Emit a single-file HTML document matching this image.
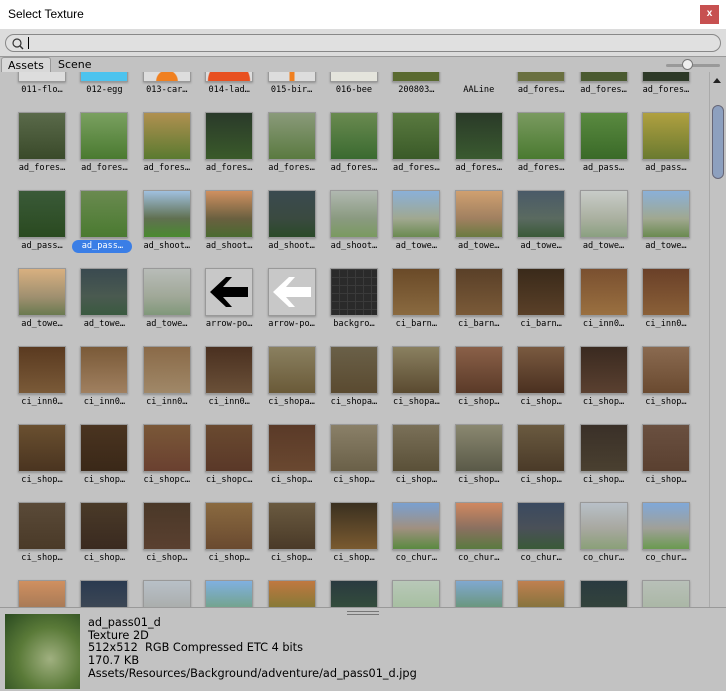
<!DOCTYPE html>
<html><head><meta charset="utf-8"><style>
*{box-sizing:border-box;margin:0;padding:0}
body{width:726px;height:691px;overflow:hidden;background:#c2c2c2;font-family:"DejaVu Sans","Liberation Sans",sans-serif;position:relative}
.title{position:absolute;left:0;top:0;width:726px;height:29px;background:#fff;font-size:12px;padding:7px 0 0 8px;color:#000;font-family:"Liberation Sans",sans-serif}
.close{position:absolute;right:7px;top:5px;width:19px;height:19px;background:#c75050;color:#fff;font-size:10px;text-align:center;line-height:18px;font-weight:bold}
.sbar{position:absolute;left:0;top:29px;width:726px;height:27px;background:#dcdcdc}
.search{position:absolute;left:5px;top:5px;width:716px;height:18px;border:1px solid #888;border-radius:9px;background:#e0e0e0}
.tabs{position:absolute;left:0;top:56px;width:726px;height:16px;background:#c2c2c2;border-top:1px solid #999}
.tab{position:absolute;top:0;height:16px;font-size:11px;padding:1px 6px;color:#000}
.grid{position:absolute;left:0;top:72px;width:708px;height:535px;overflow:hidden;background:#c2c2c2}
.in{position:absolute;left:11px;top:-38px;display:grid;grid-template-columns:repeat(11,62.4px);grid-auto-rows:78px}
.c{position:relative}
.t{position:absolute;left:7px;top:0;width:48px;height:48px;border:1px solid #999;box-shadow:0 1px 2px rgba(0,0,0,.25)}
.l{position:absolute;left:0;top:50px;width:62px;text-align:center;font-family:"DejaVu Sans Mono",monospace;font-size:8.6px;color:#000;line-height:13px}
.sel{background:#3a7ee6;color:#fff;border-radius:7px;left:-1px;width:60px}
.scroll{position:absolute;left:709px;top:72px;width:16px;height:535px;background:#c2c2c2;border-left:1px solid #aaa}
.pane{position:absolute;left:0;top:607px;width:726px;height:84px;background:#c2c2c2;border-top:1px solid #999}
.info{position:absolute;left:88px;top:9px;font-size:11.3px;line-height:12.7px;color:#000}
</style></head><body>
<div class="title">Select Texture<div class="close">x</div></div>
<div class="sbar"><div class="search"><svg width="14" height="14" style="position:absolute;left:5px;top:2px"><circle cx="6" cy="6" r="4" fill="none" stroke="#333" stroke-width="1.2"/><line x1="9" y1="9" x2="12" y2="12" stroke="#333" stroke-width="1.4"/></svg><div style="position:absolute;left:22px;top:2px;width:1px;height:12px;background:#000"></div></div></div>
<div class="tabs"><div class="tab" style="left:1px;background:#d8d8d8;border:1px solid #999;border-bottom:none;border-radius:3px 3px 0 0">Assets</div><div class="tab" style="left:52px">Scene</div>
<div style="position:absolute;left:666px;top:7px;width:54px;height:3px;background:#999;border-radius:2px"></div><div style="position:absolute;left:682px;top:2px;width:11px;height:11px;border-radius:6px;background:#eee;border:1px solid #777"></div></div>
<div class="grid"><div class="in">
<div class="c"><div class="t" style="background:linear-gradient(#ddd 70%,#ddd);"></div><div class="l">011-flo…</div></div>
<div class="c"><div class="t" style="background:linear-gradient(#ddd 80%,#4cc3ee 80%)"></div><div class="l">012-egg</div></div>
<div class="c"><div class="t" style="background:radial-gradient(circle at 50% 100%,#f08020 20%,#ddd 22%)"></div><div class="l">013-car…</div></div>
<div class="c"><div class="t" style="background:radial-gradient(circle at 50% 100%,#e85020 40%,#ddd 42%)"></div><div class="l">014-lad…</div></div>
<div class="c"><div class="t" style="background:linear-gradient(90deg,#ddd 45%,#f08020 45%,#f08020 55%,#ddd 55%)"></div><div class="l">015-bir…</div></div>
<div class="c"><div class="t" style="background:#e4e4dc"></div><div class="l">016-bee</div></div>
<div class="c"><div class="t" style="background:#5a6a30"></div><div class="l">200803…</div></div>
<div class="c"><div class="t" style="background:#c2c2c2;border:none;box-shadow:none"></div><div class="l">AALine</div></div>
<div class="c"><div class="t" style="background:#6a7040"></div><div class="l">ad_fores…</div></div>
<div class="c"><div class="t" style="background:#4a5a30"></div><div class="l">ad_fores…</div></div>
<div class="c"><div class="t" style="background:#2e3a28"></div><div class="l">ad_fores…</div></div>

<div class="c"><div class="t" style="background:linear-gradient(#5a6a4a,#3a4a2a)"></div><div class="l">ad_fores…</div></div>
<div class="c"><div class="t" style="background:linear-gradient(#7aa060,#4a7a30)"></div><div class="l">ad_fores…</div></div>
<div class="c"><div class="t" style="background:linear-gradient(#b09050,#5a7a30)"></div><div class="l">ad_fores…</div></div>
<div class="c"><div class="t" style="background:linear-gradient(#2a3a2a,#3a5a2a)"></div><div class="l">ad_fores…</div></div>
<div class="c"><div class="t" style="background:linear-gradient(#8a9a7a,#5a7a40)"></div><div class="l">ad_fores…</div></div>
<div class="c"><div class="t" style="background:linear-gradient(#6a8a50,#3a6a30)"></div><div class="l">ad_fores…</div></div>
<div class="c"><div class="t" style="background:linear-gradient(#5a7a40,#3a5a28)"></div><div class="l">ad_fores…</div></div>
<div class="c"><div class="t" style="background:linear-gradient(#2a3a28,#3a5a30)"></div><div class="l">ad_fores…</div></div>
<div class="c"><div class="t" style="background:linear-gradient(#7a9a60,#4a7a30)"></div><div class="l">ad_fores…</div></div>
<div class="c"><div class="t" style="background:linear-gradient(#5a8a40,#3a6a28)"></div><div class="l">ad_pass…</div></div>
<div class="c"><div class="t" style="background:linear-gradient(#b0a040,#6a7a30)"></div><div class="l">ad_pass…</div></div>

<div class="c"><div class="t" style="background:linear-gradient(#3a5a38,#2a4a20)"></div><div class="l">ad_pass…</div></div>
<div class="c"><div class="t" style="background:linear-gradient(#6a8a50,#4a7a30)"></div><div class="l sel">ad_pass…</div></div>
<div class="c"><div class="t" style="background:linear-gradient(#a0c0e0,#607050 60%,#4a8a30)"></div><div class="l">ad_shoot…</div></div>
<div class="c"><div class="t" style="background:linear-gradient(#d09060,#6a6040 60%,#4a6a30)"></div><div class="l">ad_shoot…</div></div>
<div class="c"><div class="t" style="background:linear-gradient(#3a4a50,#3a4a40 60%,#2a4a28)"></div><div class="l">ad_shoot…</div></div>
<div class="c"><div class="t" style="background:linear-gradient(#b0b8b0,#8a9a80 60%,#7a9a60)"></div><div class="l">ad_shoot…</div></div>
<div class="c"><div class="t" style="background:linear-gradient(#8ab0d8,#a0a890 60%,#6a8a50)"></div><div class="l">ad_towe…</div></div>
<div class="c"><div class="t" style="background:linear-gradient(#d0a070,#a08060 60%,#6a7a40)"></div><div class="l">ad_towe…</div></div>
<div class="c"><div class="t" style="background:linear-gradient(#4a5a68,#5a6a60 60%,#3a5a38)"></div><div class="l">ad_towe…</div></div>
<div class="c"><div class="t" style="background:linear-gradient(#c8ccc8,#aab0a0 60%,#8aa080)"></div><div class="l">ad_towe…</div></div>
<div class="c"><div class="t" style="background:linear-gradient(#8ab0d8,#a0a890 60%,#6a8a50)"></div><div class="l">ad_towe…</div></div>

<div class="c"><div class="t" style="background:linear-gradient(#d8b080,#a09070 60%,#6a7a50)"></div><div class="l">ad_towe…</div></div>
<div class="c"><div class="t" style="background:linear-gradient(#3a4a50,#4a5a50 60%,#3a5a40)"></div><div class="l">ad_towe…</div></div>
<div class="c"><div class="t" style="background:linear-gradient(#b8bcb8,#a0a898 60%,#80987a)"></div><div class="l">ad_towe…</div></div>
<div class="c"><div class="t" style="background:#c8c8c8"><svg width="46" height="46"><path d="M4 23 L20 8 L26 8 L17 18 L42 18 L42 28 L17 28 L26 38 L20 38 Z" fill="#000"/></svg></div><div class="l">arrow-po…</div></div>
<div class="c"><div class="t" style="background:#c8c8c8"><svg width="46" height="46"><path d="M4 23 L20 8 L26 8 L17 18 L42 18 L42 28 L17 28 L26 38 L20 38 Z" fill="#fff"/></svg></div><div class="l">arrow-po…</div></div>
<div class="c"><div class="t" style="background:#2a2a2a;background-image:linear-gradient(#3a3a3a 1px,transparent 1px),linear-gradient(90deg,#3a3a3a 1px,transparent 1px);background-size:8px 8px"></div><div class="l">backgro…</div></div>
<div class="c"><div class="t" style="background:linear-gradient(#6a4a28,#8a6a40)"></div><div class="l">ci_barn…</div></div>
<div class="c"><div class="t" style="background:linear-gradient(#5a4028,#7a5a38)"></div><div class="l">ci_barn…</div></div>
<div class="c"><div class="t" style="background:linear-gradient(#3a2a1a,#5a4028)"></div><div class="l">ci_barn…</div></div>
<div class="c"><div class="t" style="background:linear-gradient(#7a5030,#9a7040)"></div><div class="l">ci_inn0…</div></div>
<div class="c"><div class="t" style="background:linear-gradient(#6a4028,#8a6038)"></div><div class="l">ci_inn0…</div></div>

<div class="c"><div class="t" style="background:linear-gradient(#5a3a20,#7a5a38)"></div><div class="l">ci_inn0…</div></div>
<div class="c"><div class="t" style="background:linear-gradient(#7a5a38,#a08060)"></div><div class="l">ci_inn0…</div></div>
<div class="c"><div class="t" style="background:linear-gradient(#8a6a48,#a08868)"></div><div class="l">ci_inn0…</div></div>
<div class="c"><div class="t" style="background:linear-gradient(#4a3020,#6a5038)"></div><div class="l">ci_inn0…</div></div>
<div class="c"><div class="t" style="background:linear-gradient(#8a8060,#6a5a38)"></div><div class="l">ci_shopa…</div></div>
<div class="c"><div class="t" style="background:linear-gradient(#6a6048,#5a4a30)"></div><div class="l">ci_shopa…</div></div>
<div class="c"><div class="t" style="background:linear-gradient(#8a8060,#5a4a30)"></div><div class="l">ci_shopa…</div></div>
<div class="c"><div class="t" style="background:linear-gradient(#8a6048,#5a3a28)"></div><div class="l">ci_shop…</div></div>
<div class="c"><div class="t" style="background:linear-gradient(#7a5a40,#4a3020)"></div><div class="l">ci_shop…</div></div>
<div class="c"><div class="t" style="background:linear-gradient(#3a2a20,#5a4030)"></div><div class="l">ci_shop…</div></div>
<div class="c"><div class="t" style="background:linear-gradient(#8a6a50,#6a4a30)"></div><div class="l">ci_shop…</div></div>

<div class="c"><div class="t" style="background:linear-gradient(#6a5030,#4a3420)"></div><div class="l">ci_shop…</div></div>
<div class="c"><div class="t" style="background:linear-gradient(#4a3420,#3a2818)"></div><div class="l">ci_shop…</div></div>
<div class="c"><div class="t" style="background:linear-gradient(#7a5838,#6a4030)"></div><div class="l">ci_shopc…</div></div>
<div class="c"><div class="t" style="background:linear-gradient(#6a4a30,#5a3828)"></div><div class="l">ci_shopc…</div></div>
<div class="c"><div class="t" style="background:linear-gradient(#5a3a28,#6a4830)"></div><div class="l">ci_shop…</div></div>
<div class="c"><div class="t" style="background:linear-gradient(#8a8068,#6a6048)"></div><div class="l">ci_shop…</div></div>
<div class="c"><div class="t" style="background:linear-gradient(#7a7058,#5a5038)"></div><div class="l">ci_shop…</div></div>
<div class="c"><div class="t" style="background:linear-gradient(#8a8870,#5a5a48)"></div><div class="l">ci_shop…</div></div>
<div class="c"><div class="t" style="background:linear-gradient(#6a5a40,#4a3a28)"></div><div class="l">ci_shop…</div></div>
<div class="c"><div class="t" style="background:linear-gradient(#3a3028,#4a4030)"></div><div class="l">ci_shop…</div></div>
<div class="c"><div class="t" style="background:linear-gradient(#6a5040,#5a4030)"></div><div class="l">ci_shop…</div></div>

<div class="c"><div class="t" style="background:linear-gradient(#5a4a38,#4a3a28)"></div><div class="l">ci_shop…</div></div>
<div class="c"><div class="t" style="background:linear-gradient(#4a3a28,#3a2a20)"></div><div class="l">ci_shop…</div></div>
<div class="c"><div class="t" style="background:linear-gradient(#4a3828,#5a4030)"></div><div class="l">ci_shop…</div></div>
<div class="c"><div class="t" style="background:linear-gradient(#8a6a40,#6a4a30)"></div><div class="l">ci_shop…</div></div>
<div class="c"><div class="t" style="background:linear-gradient(#6a5a40,#4a3a28)"></div><div class="l">ci_shop…</div></div>
<div class="c"><div class="t" style="background:linear-gradient(#3a3020,#7a5a30)"></div><div class="l">ci_shop…</div></div>
<div class="c"><div class="t" style="background:linear-gradient(#7aa0d0,#a09080 55%,#5a8a40)"></div><div class="l">co_chur…</div></div>
<div class="c"><div class="t" style="background:linear-gradient(#d08860,#8a7060 55%,#5a7a40)"></div><div class="l">co_chur…</div></div>
<div class="c"><div class="t" style="background:linear-gradient(#3a4a60,#4a5058 55%,#3a5a38)"></div><div class="l">co_chur…</div></div>
<div class="c"><div class="t" style="background:linear-gradient(#b8c0c8,#a8a8a0 55%,#8aa078)"></div><div class="l">co_chur…</div></div>
<div class="c"><div class="t" style="background:linear-gradient(#80a8d8,#a0a098 55%,#6a9a50)"></div><div class="l">co_chur…</div></div>

<div class="c"><div class="t" style="background:linear-gradient(#d09060,#8a6a50)"></div></div>
<div class="c"><div class="t" style="background:linear-gradient(#2a3a50,#4a5058)"></div></div>
<div class="c"><div class="t" style="background:linear-gradient(#b8c0c8,#a0a098)"></div></div>
<div class="c"><div class="t" style="background:linear-gradient(#80b0e0,#6a9a50)"></div></div>
<div class="c"><div class="t" style="background:linear-gradient(#c07840,#5a7a30)"></div></div>
<div class="c"><div class="t" style="background:linear-gradient(#2a3a40,#3a5a38)"></div></div>
<div class="c"><div class="t" style="background:linear-gradient(#b8c8b8,#9ab890)"></div></div>
<div class="c"><div class="t" style="background:linear-gradient(#80a8d0,#5a8a40)"></div></div>
<div class="c"><div class="t" style="background:linear-gradient(#c08050,#5a6a30)"></div></div>
<div class="c"><div class="t" style="background:linear-gradient(#2a3a40,#3a4a38)"></div></div>
<div class="c"><div class="t" style="background:linear-gradient(#b8c0b8,#a0b098)"></div></div>
</div></div>
<div class="scroll"><div style="position:absolute;left:3px;top:6px;width:0;height:0;border-left:4px solid transparent;border-right:4px solid transparent;border-bottom:5px solid #222"></div><div style="position:absolute;left:2px;top:33px;width:12px;height:74px;border-radius:6px;background:#8da0bf;border:1px solid #667"></div></div>
<div class="pane">
<div style="position:absolute;left:347px;top:3px;width:32px;height:4px;border-top:1px solid #777;border-bottom:1px solid #777"></div>
<div style="position:absolute;left:5px;top:6px;width:75px;height:75px;background:radial-gradient(circle at 60% 60%,#a0b080,#5a7a38 50%,#2a4a20)"></div>
<div class="info">ad_pass01_d<br>Texture 2D<br>512x512&nbsp; RGB Compressed ETC 4 bits<br>170.7 KB<br>Assets/Resources/Background/adventure/ad_pass01_d.jpg</div>
</div>
</body></html>
